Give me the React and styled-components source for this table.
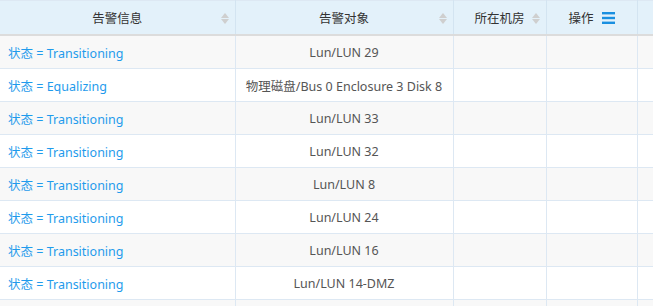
import React from "react";
import styled, { createGlobalStyle } from "styled-components";

const GlobalStyle = createGlobalStyle`
  html, body {
    margin: 0;
    padding: 0;
    background: #fff;
  }
  body {
    font-family: "Noto Sans", "Noto Sans CJK SC", sans-serif;
    font-size: 12.5px;
  }
`;

const Wrapper = styled.div`
  width: 653px;
  height: 306px;
  overflow: hidden;
`;

const Table = styled.table`
  border-collapse: collapse;
  table-layout: fixed;
  width: 700px;
  border-top: 1px solid #dde8f3;
`;

const HeadCell = styled.th`
  height: 33px;
  padding: 0;
  background: #e3f1fa;
  border-right: 1px solid #d3e4f1;
  border-bottom: 2px solid #dcdcdc;
  font-weight: normal;
  color: #333;
  position: relative;
  text-align: center;
  white-space: nowrap;
`;

const SortIcon = styled.span`
  position: absolute;
  right: 6px;
  top: 12px;
  display: flex;
  flex-direction: column;
  gap: 1px;

  &::before,
  &::after {
    content: "";
    width: 0;
    height: 0;
    border-left: 4px solid transparent;
    border-right: 4px solid transparent;
  }
  &::before {
    border-bottom: 5px solid #cfcfcf;
  }
  &::after {
    border-top: 5px solid #cfcfcf;
  }
`;

const HeadInner = styled.span`
  display: inline-flex;
  align-items: center;
  gap: 8px;
`;

const Row = styled.tr`
  background: ${(p) => (p.$odd ? "#f8f8f8" : "#fff")};
`;

const Cell = styled.td`
  height: 32px;
  padding: 0 8px;
  border-right: 1px solid #dde8f3;
  border-bottom: 1px solid #dde8f3;
  color: ${(p) => (p.$link ? "#1f9bec" : "#555")};
  text-align: ${(p) => (p.$center ? "center" : "left")};
  white-space: nowrap;
  overflow: hidden;
`;

const MenuIcon = () => (
  <svg width="13" height="12" viewBox="0 0 13 12">
    <rect x="0" y="0" width="13" height="2.4" fill="#1a8fe0" />
    <rect x="0" y="4.8" width="13" height="2.4" fill="#1a8fe0" />
    <rect x="0" y="9.6" width="13" height="2.4" fill="#1a8fe0" />
  </svg>
);

const rows = [
  ["状态 = Transitioning", "Lun/LUN 29"],
  ["状态 = Equalizing", "物理磁盘/Bus 0 Enclosure 3 Disk 8"],
  ["状态 = Transitioning", "Lun/LUN 33"],
  ["状态 = Transitioning", "Lun/LUN 32"],
  ["状态 = Transitioning", "Lun/LUN 8"],
  ["状态 = Transitioning", "Lun/LUN 24"],
  ["状态 = Transitioning", "Lun/LUN 16"],
  ["状态 = Transitioning", "Lun/LUN 14-DMZ"],
  ["", ""],
];

const App = () => {
  return (
    <Wrapper>
      <GlobalStyle />
      <Table>
        <colgroup>
          <col style={{ width: 235 }} />
          <col style={{ width: 218 }} />
          <col style={{ width: 93 }} />
          <col style={{ width: 91 }} />
          <col />
        </colgroup>
        <thead>
          <tr>
            <HeadCell>
              告警信息
              <SortIcon />
            </HeadCell>
            <HeadCell>
              告警对象
              <SortIcon />
            </HeadCell>
            <HeadCell>
              所在机房
              <SortIcon />
            </HeadCell>
            <HeadCell>
              <HeadInner>
                操作
                <MenuIcon />
              </HeadInner>
            </HeadCell>
            <HeadCell />
          </tr>
        </thead>
        <tbody>
          {rows.map(([info, target], i) => (
            <Row key={i} $odd={i % 2 === 0}>
              <Cell $link>{info}</Cell>
              <Cell $center>{target}</Cell>
              <Cell />
              <Cell />
              <Cell />
            </Row>
          ))}
        </tbody>
      </Table>
    </Wrapper>
  );
};

export default App;
